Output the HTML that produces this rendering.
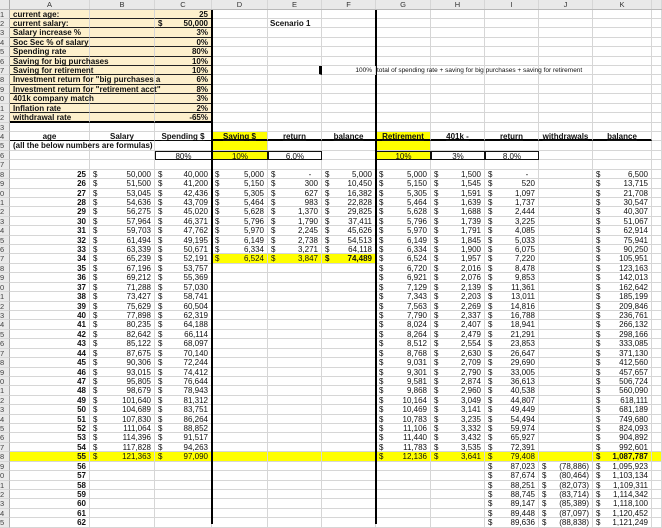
<!DOCTYPE html>
<html><head><meta charset="utf-8"><style>
*{margin:0;padding:0;box-sizing:border-box}
body{width:662px;height:524px;overflow:hidden;background:#fff;font-family:"Liberation Sans",Arial,sans-serif;font-size:8px;color:#111;position:relative}
.h{height:9.5px;display:flex;background:#e9e9e9;border-bottom:1px solid #b8b8b8}
.h p{text-align:center;line-height:9px;color:#333;font-size:7.5px}
.r{height:9.43px;display:flex}
.r p,.h p{position:relative;border-right:1px solid #d6d6d6;white-space:nowrap;line-height:9px}
.r p{border-bottom:1px solid #d6d6d6;text-align:right;padding-right:3px}
.r p:nth-child(1),.h p:nth-child(1){width:10px;background:#e9e9e9;text-align:left;padding:0;color:#444;font-size:7.5px;border-right:1px solid #aaa}
p:nth-child(2){width:80px}p:nth-child(3){width:65px}p:nth-child(4){width:57px}
p:nth-child(5){width:56px}p:nth-child(6){width:54px}p:nth-child(7){width:54px}
p:nth-child(8){width:55px}p:nth-child(9){width:54px}p:nth-child(10){width:54px}
p:nth-child(11){width:54px}p:nth-child(12){width:59px}p:nth-child(13){width:10px}
u{text-decoration:none;position:absolute;left:3px;top:0}
.b{font-weight:bold}
.l{text-align:left!important;padding-left:3px;overflow:visible;z-index:2;font-weight:bold}
.bg{background:#fdf0cc;border-bottom:1px solid #222!important}
.y{background:#ffff00!important}
.r.yr p:not(:first-child){background:#ffff00}
.c{text-align:center!important;padding:0!important;text-decoration:underline;font-weight:bold}
.bx{border:1px solid #111!important;text-align:center!important;padding:0!important}
.vl{position:absolute;width:2px;background:#000;top:10px;bottom:0}
</style></head><body>
<div class="h"><p></p><p>A</p><p>B</p><p>C</p><p>D</p><p>E</p><p>F</p><p>G</p><p>H</p><p>I</p><p>J</p><p>K</p><p></p></div>
<div class="r"><p>1</p><p class="l bg">current age:</p><p class="bg"></p><p class="bg b">25</p><p></p><p></p><p></p><p></p><p></p><p></p><p></p><p></p><p></p></div>
<div class="r"><p>2</p><p class="l bg">current salary:</p><p class="bg"></p><p class="bg b"><u>$</u>50,000</p><p></p><p class="l" style="padding-left:2px">Scenario 1</p><p></p><p></p><p></p><p></p><p></p><p></p><p></p></div>
<div class="r"><p>3</p><p class="l bg">Salary increase %</p><p class="bg"></p><p class="bg b">3%</p><p></p><p></p><p></p><p></p><p></p><p></p><p></p><p></p><p></p></div>
<div class="r"><p>4</p><p class="l bg">Soc Sec % of salary</p><p class="bg"></p><p class="bg b">0%</p><p></p><p></p><p></p><p></p><p></p><p></p><p></p><p></p><p></p></div>
<div class="r"><p>5</p><p class="l bg">Spending rate</p><p class="bg"></p><p class="bg b">80%</p><p></p><p></p><p></p><p></p><p></p><p></p><p></p><p></p><p></p></div>
<div class="r"><p>6</p><p class="l bg">Saving for big purchases</p><p class="bg"></p><p class="bg b">10%</p><p></p><p></p><p></p><p></p><p></p><p></p><p></p><p></p><p></p></div>
<div class="r"><p>7</p><p class="l bg">Saving for retirement</p><p class="bg"></p><p class="bg b">10%</p><p></p><p style="border-right:3px solid #000"></p><p style="overflow:visible;z-index:2;font-size:6.5px">100%<span style="position:absolute;left:55px;top:0;font-size:6.5px">total of spending rate + saving for big purchases + saving for retirement</span></p><p></p><p></p><p></p><p></p><p></p><p></p></div>
<div class="r"><p>8</p><p class="l bg">Investment return for "big purchases a</p><p class="bg"></p><p class="bg b">6%</p><p></p><p></p><p></p><p></p><p></p><p></p><p></p><p></p><p></p></div>
<div class="r"><p>9</p><p class="l bg">Investment return for "retirement acct"</p><p class="bg"></p><p class="bg b">8%</p><p></p><p></p><p></p><p></p><p></p><p></p><p></p><p></p><p></p></div>
<div class="r"><p>0</p><p class="l bg">401k company match</p><p class="bg"></p><p class="bg b">3%</p><p></p><p></p><p></p><p></p><p></p><p></p><p></p><p></p><p></p></div>
<div class="r"><p>1</p><p class="l bg">Inflation rate</p><p class="bg"></p><p class="bg b">2%</p><p></p><p></p><p></p><p></p><p></p><p></p><p></p><p></p><p></p></div>
<div class="r"><p>2</p><p class="l bg" style="border-bottom:2px solid #000!important">withdrawal rate</p><p class="bg" style="border-bottom:2px solid #000!important"></p><p class="bg b" style="border-bottom:2px solid #000!important">-65%</p><p></p><p></p><p></p><p></p><p></p><p></p><p></p><p></p><p></p></div>
<div class="r"><p>3</p><p></p><p></p><p></p><p></p><p></p><p></p><p></p><p></p><p></p><p></p><p></p><p></p></div>
<div class="r" style="height:9.43px"><p>4</p><p class="c" style="border-bottom:1px solid #000">age</p><p class="c" style="border-bottom:1px solid #000">Salary</p><p class="c" style="border-bottom:1px solid #000">Spending $</p><p class="c y" style="border-bottom:2px solid #000">Saving $</p><p class="c" style="border-bottom:2px solid #000">return</p><p class="c" style="border-bottom:2px solid #000">balance</p><p class="c y" style="border-bottom:2px solid #000">Retirement</p><p class="c" style="border-bottom:2px solid #000">401k -</p><p class="c" style="border-bottom:2px solid #000">return</p><p class="c" style="border-bottom:2px solid #000">withdrawals</p><p class="c" style="border-bottom:2px solid #000">balance</p><p></p></div>
<div class="r"><p>5</p><p class="l">(all the below numbers are formulas)</p><p></p><p></p><p class="y"></p><p></p><p></p><p class="y"></p><p></p><p></p><p></p><p></p><p></p></div>
<div class="r"><p>6</p><p></p><p></p><p class="bx">80%</p><p class="bx y">10%</p><p class="bx">6.0%</p><p></p><p class="bx y">10%</p><p class="bx">3%</p><p class="bx">8.0%</p><p></p><p></p><p></p></div>
<div class="r"><p>7</p><p></p><p></p><p></p><p></p><p></p><p></p><p></p><p></p><p></p><p></p><p></p><p></p></div>
<div class="r"><p>8</p><p class="b">25</p><p><u>$</u>50,000</p><p><u>$</u>40,000</p><p><u>$</u>5,000</p><p><u>$</u>-&nbsp;&nbsp;&nbsp;</p><p><u>$</u>5,000</p><p><u>$</u>5,000</p><p><u>$</u>1,500</p><p><u>$</u>-&nbsp;&nbsp;&nbsp;</p><p></p><p><u>$</u>6,500</p><p></p></div>
<div class="r"><p>9</p><p class="b">26</p><p><u>$</u>51,500</p><p><u>$</u>41,200</p><p><u>$</u>5,150</p><p><u>$</u>300</p><p><u>$</u>10,450</p><p><u>$</u>5,150</p><p><u>$</u>1,545</p><p><u>$</u>520</p><p></p><p><u>$</u>13,715</p><p></p></div>
<div class="r"><p>0</p><p class="b">27</p><p><u>$</u>53,045</p><p><u>$</u>42,436</p><p><u>$</u>5,305</p><p><u>$</u>627</p><p><u>$</u>16,382</p><p><u>$</u>5,305</p><p><u>$</u>1,591</p><p><u>$</u>1,097</p><p></p><p><u>$</u>21,708</p><p></p></div>
<div class="r"><p>1</p><p class="b">28</p><p><u>$</u>54,636</p><p><u>$</u>43,709</p><p><u>$</u>5,464</p><p><u>$</u>983</p><p><u>$</u>22,828</p><p><u>$</u>5,464</p><p><u>$</u>1,639</p><p><u>$</u>1,737</p><p></p><p><u>$</u>30,547</p><p></p></div>
<div class="r"><p>2</p><p class="b">29</p><p><u>$</u>56,275</p><p><u>$</u>45,020</p><p><u>$</u>5,628</p><p><u>$</u>1,370</p><p><u>$</u>29,825</p><p><u>$</u>5,628</p><p><u>$</u>1,688</p><p><u>$</u>2,444</p><p></p><p><u>$</u>40,307</p><p></p></div>
<div class="r"><p>3</p><p class="b">30</p><p><u>$</u>57,964</p><p><u>$</u>46,371</p><p><u>$</u>5,796</p><p><u>$</u>1,790</p><p><u>$</u>37,411</p><p><u>$</u>5,796</p><p><u>$</u>1,739</p><p><u>$</u>3,225</p><p></p><p><u>$</u>51,067</p><p></p></div>
<div class="r"><p>4</p><p class="b">31</p><p><u>$</u>59,703</p><p><u>$</u>47,762</p><p><u>$</u>5,970</p><p><u>$</u>2,245</p><p><u>$</u>45,626</p><p><u>$</u>5,970</p><p><u>$</u>1,791</p><p><u>$</u>4,085</p><p></p><p><u>$</u>62,914</p><p></p></div>
<div class="r"><p>5</p><p class="b">32</p><p><u>$</u>61,494</p><p><u>$</u>49,195</p><p><u>$</u>6,149</p><p><u>$</u>2,738</p><p><u>$</u>54,513</p><p><u>$</u>6,149</p><p><u>$</u>1,845</p><p><u>$</u>5,033</p><p></p><p><u>$</u>75,941</p><p></p></div>
<div class="r"><p>6</p><p class="b">33</p><p><u>$</u>63,339</p><p><u>$</u>50,671</p><p><u>$</u>6,334</p><p><u>$</u>3,271</p><p><u>$</u>64,118</p><p><u>$</u>6,334</p><p><u>$</u>1,900</p><p><u>$</u>6,075</p><p></p><p><u>$</u>90,250</p><p></p></div>
<div class="r"><p>7</p><p class="b">34</p><p><u>$</u>65,239</p><p><u>$</u>52,191</p><p class="y"><u>$</u>6,524</p><p class="y"><u>$</u>3,847</p><p class="y b"><u>$</u>74,489</p><p><u>$</u>6,524</p><p><u>$</u>1,957</p><p><u>$</u>7,220</p><p></p><p><u>$</u>105,951</p><p></p></div>
<div class="r"><p>8</p><p class="b">35</p><p><u>$</u>67,196</p><p><u>$</u>53,757</p><p></p><p></p><p></p><p><u>$</u>6,720</p><p><u>$</u>2,016</p><p><u>$</u>8,478</p><p></p><p><u>$</u>123,163</p><p></p></div>
<div class="r"><p>9</p><p class="b">36</p><p><u>$</u>69,212</p><p><u>$</u>55,369</p><p></p><p></p><p></p><p><u>$</u>6,921</p><p><u>$</u>2,076</p><p><u>$</u>9,853</p><p></p><p><u>$</u>142,013</p><p></p></div>
<div class="r"><p>0</p><p class="b">37</p><p><u>$</u>71,288</p><p><u>$</u>57,030</p><p></p><p></p><p></p><p><u>$</u>7,129</p><p><u>$</u>2,139</p><p><u>$</u>11,361</p><p></p><p><u>$</u>162,642</p><p></p></div>
<div class="r"><p>1</p><p class="b">38</p><p><u>$</u>73,427</p><p><u>$</u>58,741</p><p></p><p></p><p></p><p><u>$</u>7,343</p><p><u>$</u>2,203</p><p><u>$</u>13,011</p><p></p><p><u>$</u>185,199</p><p></p></div>
<div class="r"><p>2</p><p class="b">39</p><p><u>$</u>75,629</p><p><u>$</u>60,504</p><p></p><p></p><p></p><p><u>$</u>7,563</p><p><u>$</u>2,269</p><p><u>$</u>14,816</p><p></p><p><u>$</u>209,846</p><p></p></div>
<div class="r"><p>3</p><p class="b">40</p><p><u>$</u>77,898</p><p><u>$</u>62,319</p><p></p><p></p><p></p><p><u>$</u>7,790</p><p><u>$</u>2,337</p><p><u>$</u>16,788</p><p></p><p><u>$</u>236,761</p><p></p></div>
<div class="r"><p>4</p><p class="b">41</p><p><u>$</u>80,235</p><p><u>$</u>64,188</p><p></p><p></p><p></p><p><u>$</u>8,024</p><p><u>$</u>2,407</p><p><u>$</u>18,941</p><p></p><p><u>$</u>266,132</p><p></p></div>
<div class="r"><p>5</p><p class="b">42</p><p><u>$</u>82,642</p><p><u>$</u>66,114</p><p></p><p></p><p></p><p><u>$</u>8,264</p><p><u>$</u>2,479</p><p><u>$</u>21,291</p><p></p><p><u>$</u>298,166</p><p></p></div>
<div class="r"><p>6</p><p class="b">43</p><p><u>$</u>85,122</p><p><u>$</u>68,097</p><p></p><p></p><p></p><p><u>$</u>8,512</p><p><u>$</u>2,554</p><p><u>$</u>23,853</p><p></p><p><u>$</u>333,085</p><p></p></div>
<div class="r"><p>7</p><p class="b">44</p><p><u>$</u>87,675</p><p><u>$</u>70,140</p><p></p><p></p><p></p><p><u>$</u>8,768</p><p><u>$</u>2,630</p><p><u>$</u>26,647</p><p></p><p><u>$</u>371,130</p><p></p></div>
<div class="r"><p>8</p><p class="b">45</p><p><u>$</u>90,306</p><p><u>$</u>72,244</p><p></p><p></p><p></p><p><u>$</u>9,031</p><p><u>$</u>2,709</p><p><u>$</u>29,690</p><p></p><p><u>$</u>412,560</p><p></p></div>
<div class="r"><p>9</p><p class="b">46</p><p><u>$</u>93,015</p><p><u>$</u>74,412</p><p></p><p></p><p></p><p><u>$</u>9,301</p><p><u>$</u>2,790</p><p><u>$</u>33,005</p><p></p><p><u>$</u>457,657</p><p></p></div>
<div class="r"><p>0</p><p class="b">47</p><p><u>$</u>95,805</p><p><u>$</u>76,644</p><p></p><p></p><p></p><p><u>$</u>9,581</p><p><u>$</u>2,874</p><p><u>$</u>36,613</p><p></p><p><u>$</u>506,724</p><p></p></div>
<div class="r"><p>1</p><p class="b">48</p><p><u>$</u>98,679</p><p><u>$</u>78,943</p><p></p><p></p><p></p><p><u>$</u>9,868</p><p><u>$</u>2,960</p><p><u>$</u>40,538</p><p></p><p><u>$</u>560,090</p><p></p></div>
<div class="r"><p>2</p><p class="b">49</p><p><u>$</u>101,640</p><p><u>$</u>81,312</p><p></p><p></p><p></p><p><u>$</u>10,164</p><p><u>$</u>3,049</p><p><u>$</u>44,807</p><p></p><p><u>$</u>618,111</p><p></p></div>
<div class="r"><p>3</p><p class="b">50</p><p><u>$</u>104,689</p><p><u>$</u>83,751</p><p></p><p></p><p></p><p><u>$</u>10,469</p><p><u>$</u>3,141</p><p><u>$</u>49,449</p><p></p><p><u>$</u>681,189</p><p></p></div>
<div class="r"><p>4</p><p class="b">51</p><p><u>$</u>107,830</p><p><u>$</u>86,264</p><p></p><p></p><p></p><p><u>$</u>10,783</p><p><u>$</u>3,235</p><p><u>$</u>54,494</p><p></p><p><u>$</u>749,680</p><p></p></div>
<div class="r"><p>5</p><p class="b">52</p><p><u>$</u>111,064</p><p><u>$</u>88,852</p><p></p><p></p><p></p><p><u>$</u>11,106</p><p><u>$</u>3,332</p><p><u>$</u>59,974</p><p></p><p><u>$</u>824,093</p><p></p></div>
<div class="r"><p>6</p><p class="b">53</p><p><u>$</u>114,396</p><p><u>$</u>91,517</p><p></p><p></p><p></p><p><u>$</u>11,440</p><p><u>$</u>3,432</p><p><u>$</u>65,927</p><p></p><p><u>$</u>904,892</p><p></p></div>
<div class="r"><p>7</p><p class="b">54</p><p><u>$</u>117,828</p><p><u>$</u>94,263</p><p></p><p></p><p></p><p><u>$</u>11,783</p><p><u>$</u>3,535</p><p><u>$</u>72,391</p><p></p><p><u>$</u>992,601</p><p></p></div>
<div class="r yr"><p>8</p><p class="b">55</p><p><u>$</u>121,363</p><p><u>$</u>97,090</p><p></p><p></p><p></p><p><u>$</u>12,136</p><p><u>$</u>3,641</p><p><u>$</u>79,408</p><p></p><p class="b"><u>$</u>1,087,787</p><p></p></div>
<div class="r"><p>9</p><p class="b">56</p><p></p><p></p><p></p><p></p><p></p><p></p><p></p><p><u>$</u>87,023</p><p><u>$</u>(78,886)</p><p><u>$</u>1,095,923</p><p></p></div>
<div class="r"><p>0</p><p class="b">57</p><p></p><p></p><p></p><p></p><p></p><p></p><p></p><p><u>$</u>87,674</p><p><u>$</u>(80,464)</p><p><u>$</u>1,103,134</p><p></p></div>
<div class="r"><p>1</p><p class="b">58</p><p></p><p></p><p></p><p></p><p></p><p></p><p></p><p><u>$</u>88,251</p><p><u>$</u>(82,073)</p><p><u>$</u>1,109,311</p><p></p></div>
<div class="r"><p>2</p><p class="b">59</p><p></p><p></p><p></p><p></p><p></p><p></p><p></p><p><u>$</u>88,745</p><p><u>$</u>(83,714)</p><p><u>$</u>1,114,342</p><p></p></div>
<div class="r"><p>3</p><p class="b">60</p><p></p><p></p><p></p><p></p><p></p><p></p><p></p><p><u>$</u>89,147</p><p><u>$</u>(85,389)</p><p><u>$</u>1,118,100</p><p></p></div>
<div class="r"><p>4</p><p class="b">61</p><p></p><p></p><p></p><p></p><p></p><p></p><p></p><p><u>$</u>89,448</p><p><u>$</u>(87,097)</p><p><u>$</u>1,120,452</p><p></p></div>
<div class="r"><p>5</p><p class="b">62</p><p></p><p></p><p></p><p></p><p></p><p></p><p></p><p><u>$</u>89,636</p><p><u>$</u>(88,838)</p><p><u>$</u>1,121,249</p><p></p></div>
<div class="vl" style="left:211px"></div>
<div class="vl" style="left:375px"></div>
</body></html>
